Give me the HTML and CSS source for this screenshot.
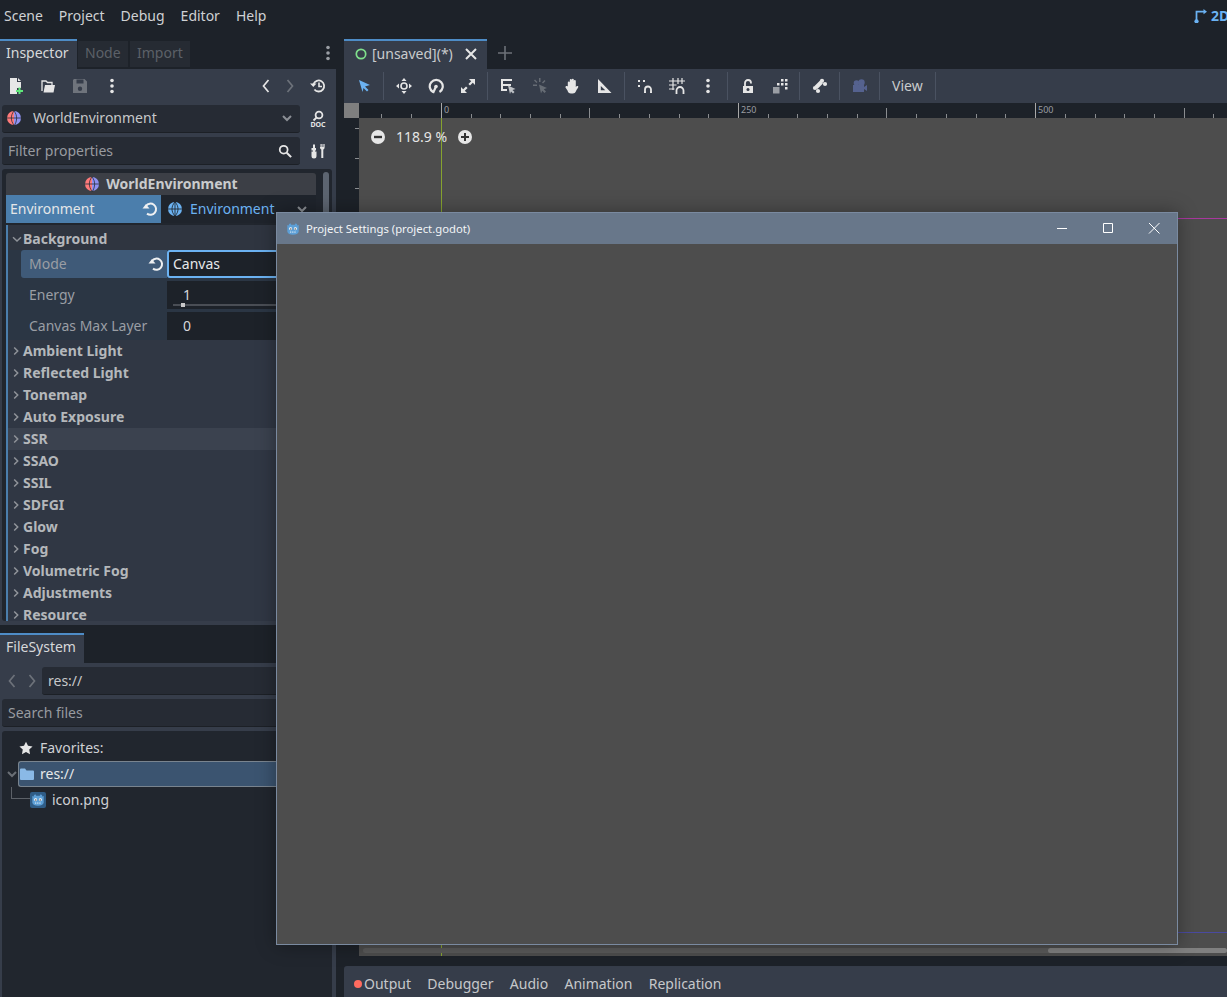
FILE: index.html
```html
<!DOCTYPE html>
<html lang="en">
<head>
<meta charset="utf-8">
<title>Godot Editor</title>
<link rel="stylesheet" href="styles.css">
</head>
<body>
<svg class="defs" aria-hidden="true">
  <symbol id="i-kebab" viewBox="0 0 16 16"><circle cx="8" cy="2.5" r="1.8"/><circle cx="8" cy="8" r="1.8"/><circle cx="8" cy="13.5" r="1.8"/></symbol>
  <symbol id="i-left" viewBox="0 0 16 16"><path d="M10.5 2 5.5 8l5 6" fill="none" stroke="currentColor" stroke-width="1.7"/></symbol>
  <symbol id="i-right" viewBox="0 0 16 16"><path d="M5.5 2l5 6-5 6" fill="none" stroke="currentColor" stroke-width="1.7"/></symbol>
  <symbol id="i-down" viewBox="0 0 16 16"><path d="M4 6l4 4 4-4" fill="none" stroke="currentColor" stroke-width="2"/></symbol>
  <symbol id="i-sec" viewBox="0 0 16 16"><path d="M6.200 4.500 9.700 8l-3.500 3.500" fill="none" stroke="currentColor" stroke-width="1.500"/></symbol>
  <symbol id="i-secdown" viewBox="0 0 16 16"><path d="M5 6.200 9 10l4-3.800" fill="none" stroke="currentColor" stroke-width="1.500"/></symbol>
  <symbol id="i-reload" viewBox="0 0 16 16"><path d="M5 12.600A5.600 5.600 0 1 0 4 4.800" fill="none" stroke="currentColor" stroke-width="2"/><path d="M0.500 7.500 7.500 7.500 3.800 3.200Z" fill="currentColor"/></symbol>
  <symbol id="i-globe" viewBox="0 0 16 16"><path d="M8 1a7 7 0 0 0 0 14z" fill="#ff7a7a"/><path d="M8 1a7 7 0 0 1 0 14z" fill="#8f92f2"/><path d="M1 8h14M8 1C4.500 5 4.500 11 8 15M8 1c3.500 4 3.500 10 0 15" fill="none" stroke="#2b303a" stroke-opacity=".8" stroke-width="1"/></symbol>
  <symbol id="i-globe-blue" viewBox="0 0 16 16"><circle cx="8" cy="8" r="7" fill="#6bb2f2"/><path d="M1 8h14M8 1v14M8 1C4 5 4 11 8 15M8 1c4 4 4 10 0 14" fill="none" stroke="#1f242c" stroke-opacity=".85" stroke-width="1"/></symbol>
  <symbol id="i-godot" viewBox="0 0 16 16"><path d="M5 1.500 6 3h4l1-1.500 1.800 1 -.3 1.500L14.500 3.500V11c-.5 2-3 3.500-6.500 3.500S2 13 1.500 11V3.500L3.500 4l-.3-1.500z" fill="#5d9fd6"/><circle cx="5.300" cy="7.800" r="1.700" fill="#fff"/><circle cx="10.700" cy="7.800" r="1.700" fill="#fff"/><circle cx="5.500" cy="8" r=".8" fill="#333"/><circle cx="10.500" cy="8" r=".8" fill="#333"/><path d="M4.500 11.500h7" stroke="#fff" stroke-width="1" stroke-dasharray="1.500 1"/></symbol>
</svg>

<header class="menubar">
  <nav class="menus">
    <span class="menu">Scene</span><span class="menu">Project</span><span class="menu">Debug</span><span class="menu">Editor</span><span class="menu">Help</span>
  </nav>
  <div class="renderer">
    <svg class="ic14" viewBox="0 0 16 16"><path d="M4 15V3h9" fill="none" stroke="#6bb2f2" stroke-width="2"/><path d="M12 0l4 3-4 3z" fill="#6bb2f2"/><circle cx="4" cy="14" r="2.400" fill="#6bb2f2"/></svg>
    <b>2D</b>
  </div>
</header>

<main class="main">
  <aside class="left">
    <section class="inspector">
      <div class="tabbar">
        <span class="tab active">Inspector</span>
        <span class="tab dim tab-node">Node</span>
        <span class="tab dim">Import</span>
        <svg class="ic16 dock-kebab"><use href="#i-kebab"/></svg>
      </div>
      <div class="panel insp-panel">
        <div class="toolbar">
          <span class="btn"><svg class="ic16" viewBox="0 0 16 16"><path d="M2 0h7v4h4v6H9v6H2z" fill="#e6e6e6"/><path d="M10 0l3 3h-3z" fill="#e6e6e6"/><path d="M10.500 9.500h2v2.500h2.500v2h-2.500v2.500h-2V14H8v-2h2.500z" fill="#5fe87a"/></svg></span>
          <span class="btn"><svg class="ic16" viewBox="0 0 16 16"><path d="M2 13V3h4l1.500 1.500H12V7" fill="none" stroke="#e6e6e6" stroke-width="1.300"/><path d="M3.500 14.500 5 7h10l-1.500 7.500z" fill="#e6e6e6"/></svg></span>
          <span class="btn"><svg class="ic16" viewBox="0 0 16 16"><path fill-rule="evenodd" d="M2 1h10.500L15 3.500V15H1V2zM4.500 1.500v4h7v-4zM8 8.500a2.200 2.200 0 1 0 0 4.400 2.200 2.200 0 0 0 0-4.400z" fill="#6f747c"/></svg></span>
          <span class="btn light"><svg class="ic16"><use href="#i-kebab"/></svg></span>
          <span class="spring"></span>
          <span class="btn narrow light"><svg class="ic16"><use href="#i-left"/></svg></span>
          <span class="btn narrow faint"><svg class="ic16"><use href="#i-right"/></svg></span>
          <span class="btn history"><svg class="ic16" viewBox="0 0 16 16"><path d="M4.400 11.500A5.500 5.500 0 1 0 3.500 6" fill="none" stroke="#e6e6e6" stroke-width="1.800"/><path d="M0 5.500h6.500l-3.200 3.500z" fill="#e6e6e6"/><path d="M9 4.500V8.500H12" fill="none" stroke="#e6e6e6" stroke-width="1.600"/></svg></span>
        </div>
        <div class="field-row">
          <div class="input select">
            <svg class="ic16"><use href="#i-globe"/></svg>
            <span class="select-text">WorldEnvironment</span>
            <svg class="ic16 caret"><use href="#i-down"/></svg>
          </div>
          <span class="side-btn"><svg class="ic18" viewBox="0 0 18 18"><circle cx="10" cy="5" r="3.400" fill="none" stroke="#e6e6e6" stroke-width="1.800"/><path d="M7.600 7.500 4.500 10.500" stroke="#e6e6e6" stroke-width="1.800"/><text x="9" y="17" class="doc-text">DOC</text></svg></span>
        </div>
        <div class="field-row">
          <div class="input">
            <span class="placeholder">Filter properties</span>
            <svg class="ic14 search" viewBox="0 0 16 16"><circle cx="6.500" cy="6.500" r="4.500" fill="none" stroke="#e6e6e6" stroke-width="2"/><path d="M10 10l5 5" stroke="#e6e6e6" stroke-width="2.400"/></svg>
          </div>
          <span class="side-btn"><svg class="ic16" viewBox="0 0 16 16"><path d="M3 1.500v3.500h-1.500v2.500h1.500v1H1.500V13a2.500 2.500 0 0 0 5 0V8.500H5v-1h1V5H5V1.500z" fill="#e6e6e6"/><path d="M10 1v3.500c0 1 .7 1.800 1.300 2V15h2V6.500c.7-.2 1.300-1 1.300-2V1h-1.200v3h-.9V1h-1.200v3h-.8V1z" fill="#e6e6e6"/></svg></span>
        </div>
        <div class="props">
          <div class="props-content">
            <div class="obj-header"><svg class="ic16"><use href="#i-globe"/></svg><b>WorldEnvironment</b></div>
            <div class="env-row">
              <div class="env-label"><span>Environment</span><svg class="ic16 revert"><use href="#i-reload"/></svg></div>
              <div class="env-value"><svg class="ic16"><use href="#i-globe-blue"/></svg><span>Environment</span><svg class="ic16 caret"><use href="#i-down"/></svg></div>
            </div>
            <div class="section">
              <div class="sec-head sec-first"><svg class="ic16 chev"><use href="#i-secdown"/></svg><b>Background</b></div>
              <div class="sec-props">
                <div class="prop">
                  <div class="prop-label on"><span>Mode</span><svg class="ic16 revert"><use href="#i-reload"/></svg></div>
                  <div class="prop-value focus">Canvas</div>
                </div>
                <div class="prop">
                  <div class="prop-label"><span>Energy</span></div>
                  <div class="prop-value num">1<span class="slider"><i class="grab"></i></span></div>
                </div>
                <div class="prop">
                  <div class="prop-label"><span>Canvas Max Layer</span></div>
                  <div class="prop-value num">0</div>
                </div>
              </div>
              <div class="sec-head"><svg class="ic16 chev"><use href="#i-sec"/></svg><b>Ambient Light</b></div>
              <div class="sec-head"><svg class="ic16 chev"><use href="#i-sec"/></svg><b>Reflected Light</b></div>
              <div class="sec-head"><svg class="ic16 chev"><use href="#i-sec"/></svg><b>Tonemap</b></div>
              <div class="sec-head"><svg class="ic16 chev"><use href="#i-sec"/></svg><b>Auto Exposure</b></div>
              <div class="sec-head hover"><svg class="ic16 chev"><use href="#i-sec"/></svg><b>SSR</b></div>
              <div class="sec-head"><svg class="ic16 chev"><use href="#i-sec"/></svg><b>SSAO</b></div>
              <div class="sec-head"><svg class="ic16 chev"><use href="#i-sec"/></svg><b>SSIL</b></div>
              <div class="sec-head"><svg class="ic16 chev"><use href="#i-sec"/></svg><b>SDFGI</b></div>
              <div class="sec-head"><svg class="ic16 chev"><use href="#i-sec"/></svg><b>Glow</b></div>
              <div class="sec-head"><svg class="ic16 chev"><use href="#i-sec"/></svg><b>Fog</b></div>
              <div class="sec-head"><svg class="ic16 chev"><use href="#i-sec"/></svg><b>Volumetric Fog</b></div>
              <div class="sec-head"><svg class="ic16 chev"><use href="#i-sec"/></svg><b>Adjustments</b></div>
              <div class="sec-head"><svg class="ic16 chev"><use href="#i-sec"/></svg><b>Resource</b></div>
            </div>
          </div>
          <div class="vscroll"></div>
        </div>
      </div>
    </section>

    <section class="filesystem">
      <div class="tabbar">
        <span class="tab active fs-tab">FileSystem</span>
      </div>
      <div class="panel fs-panel">
        <div class="path-row">
          <svg class="ic16 faint"><use href="#i-left"/></svg>
          <svg class="ic16 faint"><use href="#i-right"/></svg>
          <div class="input path">res://</div>
        </div>
        <div class="input search-files"><span class="placeholder">Search files</span></div>
        <div class="fs-tree">
          <div class="fs-row fav">
            <svg class="ic14" viewBox="0 0 16 16"><path d="M8 .8l2.300 4.700 5.200.7-3.800 3.600.9 5.200L8 12.500 3.400 15l.9-5.200L.5 6.200l5.200-.7z" fill="#e6e6e6"/></svg>
            <span>Favorites:</span>
          </div>
          <div class="fs-row root">
            <svg class="ic16 root-chev"><use href="#i-down"/></svg>
            <div class="root-box">
              <svg class="ic16" viewBox="0 0 16 16"><path d="M1 3.500a1 1 0 0 1 1-1h4l1.500 2H14a1 1 0 0 1 1 1V13a1 1 0 0 1-1 1H2a1 1 0 0 1-1-1z" fill="#8ab9e6"/></svg>
              <span>res://</span>
            </div>
          </div>
          <div class="fs-row file">
            <span class="connector"></span>
            <span class="file-ic"><svg class="ic14"><use href="#i-godot"/></svg></span>
            <span>icon.png</span>
          </div>
        </div>
      </div>
    </section>
  </aside>

  <section class="center">
    <div class="scene-tabs">
      <div class="scene-tab">
        <svg class="ic12" viewBox="0 0 12 12"><circle cx="6" cy="6" r="4.700" fill="none" stroke="#7fe08c" stroke-width="1.700"/></svg>
        <span>[unsaved](*)</span>
        <svg class="ic16 tab-x" viewBox="0 0 16 16"><path d="M3 3l10 10M13 3 3 13" stroke="#e6e6e6" stroke-width="2"/></svg>
      </div>
      <svg class="ic16 tab-plus" viewBox="0 0 16 16"><path d="M8 1v14M1 8h14" stroke="#6d7278" stroke-width="1.600"/></svg>
    </div>

    <div class="toolbar vp-tools">
      <span class="btn"><svg class="ic16" viewBox="0 0 16 16"><path d="M3 2l11 5-5 1.500 3.500 3.500-1.500 1.500L7.500 10 6.500 14z" fill="#6bb2f2"/></svg></span>
      <span class="sep"></span>
      <span class="btn"><svg class="ic16" viewBox="0 0 16 16"><path d="M8 0l2.500 3h-5zM8 16l-2.500-3h5zM0 8l3-2.500v5zM16 8l-3 2.500v-5z" fill="#e6e6e6"/><circle cx="8" cy="8" r="3" fill="none" stroke="#e6e6e6" stroke-width="1.600"/></svg></span>
      <span class="btn"><svg class="ic16" viewBox="0 0 16 16"><path d="M5 14A6.500 6.500 0 1 1 11.500 14" fill="none" stroke="#e6e6e6" stroke-width="2.200"/><circle cx="8" cy="8.500" r="1.800" fill="#e6e6e6"/><path d="M8 8.500 5 15" stroke="#e6e6e6" stroke-width="2.200"/></svg></span>
      <span class="btn"><svg class="ic16" viewBox="0 0 16 16"><path d="M9 1h6v6l-2.200-2.200-2.800 2.800-1.600-1.600 2.800-2.800zM7 15H1V9l2.200 2.200 2.800-2.800 1.600 1.600-2.800 2.800z" fill="#e6e6e6"/></svg></span>
      <span class="sep"></span>
      <span class="btn"><svg class="ic16" viewBox="0 0 16 16"><path d="M1 1h11v2H3v3h8v2H3v3h4v2H1z" fill="#e6e6e6"/><path d="M8 7.500l7.500 3.500-3 1 2 2-1.500 1.500-2-2-1 2.500z" fill="#bfc2c6"/></svg></span>
      <span class="btn"><svg class="ic16" viewBox="0 0 16 16"><path d="M7 0h1.500v4H7zM1 6.500h4V8H1zM3 1.500l2.500 2.500-1 1L2 2.500zM12.500 2l1 1-2.500 2.500-1-1z" fill="#666c74"/><path d="M7 6.500l8 3.500-3.200 1.200 2.200 2.300-1.500 1.500-2.200-2.300L9 15.500z" fill="#666c74"/></svg></span>
      <span class="btn"><svg class="ic16" viewBox="0 0 16 16"><path d="M3.800 8.500V4.500a1 1 0 0 1 2 0V2a1 1 0 0 1 2 0v-.2a1 1 0 0 1 2 0V3a1 1 0 0 1 2 0v6c.5-1 2-1.300 2.500-.5.300 1-1.500 2.500-2.500 5-.5 1-1.500 2-3 2H7c-2 0-3-1-3.500-3L1.500 9.500c-.4-1 1-2 2.300-1z" fill="#e6e6e6"/></svg></span>
      <span class="btn"><svg class="ic16" viewBox="0 0 16 16"><path fill-rule="evenodd" d="M2 1v14h13.500zM4.800 8v4.300h4.500z" fill="#e6e6e6"/></svg></span>
      <span class="sep wide"></span>
      <span class="btn"><svg class="ic16" viewBox="0 0 16 16"><path d="M8 15v-3.500a3 3 0 0 1 6 0V15" fill="none" stroke="#e6e6e6" stroke-width="1.800"/><path d="M7 13.500h2V15H7zM13 13.500h2V15h-2z" fill="#e6e6e6"/><path d="M1 2h2v2H1zM6 2h2v2H6zM1 7h2v2H1z" fill="#e6e6e6"/></svg></span>
      <span class="btn tight"><svg class="ic16" viewBox="0 0 16 16"><path d="M4 0v12M9 0v6M13 0v6M0 3h16M0 7h7.500M0 11h5.500" fill="none" stroke="#e6e6e6" stroke-width="1.200"/><path d="M7.500 16v-3.500a3.500 3.500 0 0 1 7 0V16" fill="none" stroke="#e6e6e6" stroke-width="1.800"/></svg></span>
      <span class="btn light"><svg class="ic16"><use href="#i-kebab"/></svg></span>
      <span class="sep"></span>
      <span class="btn"><svg class="ic16" viewBox="0 0 16 16"><path d="M3 8h10v7H3z" fill="#e6e6e6"/><path d="M5 8V5a3 3 0 0 1 6 0v.5" fill="none" stroke="#e6e6e6" stroke-width="1.800"/><circle cx="8" cy="11.500" r="1.500" fill="#363d4a"/></svg></span>
      <span class="btn"><svg class="ic16" viewBox="0 0 16 16"><path d="M9 1h2.500v2.500H9zM13 1h2.500v2.500H13zM13 5h2.500v2.500H13zM5 5h2.500v2.500H5zM13 9h2.500v2.500H13zM1 9h2.500v2.500H1z" fill="#e6e6e6"/><path d="M1 9h6.500v6.500H1z" fill="#9a9ea4"/><path d="M9 5h2.500v2.500H9z" fill="#e6e6e6"/></svg></span>
      <span class="sep"></span>
      <span class="btn"><svg class="ic16" viewBox="0 0 16 16"><path d="M4 9.500 9.500 4" stroke="#e6e6e6" stroke-width="4"/><circle cx="10" cy="2.800" r="2.100" fill="#e6e6e6"/><circle cx="13" cy="6" r="2.100" fill="#e6e6e6"/><circle cx="3" cy="10" r="2.100" fill="#e6e6e6"/><circle cx="6" cy="13" r="2.100" fill="#e6e6e6"/></svg></span>
      <span class="sep"></span>
      <span class="btn"><svg class="ic16" viewBox="0 0 16 16"><circle cx="4.500" cy="5" r="2.800" fill="#55628f"/><circle cx="9.500" cy="4.500" r="3.200" fill="#55628f"/><path d="M1 7h11v7H1zM12 9l3-2v6l-3-2z" fill="#55628f"/></svg></span>
      <span class="sep"></span>
      <span class="view-btn">View</span>
      <span class="sep"></span>
    </div>

    <div class="ruler-row">
      <span class="ruler-corner"></span>
      <svg class="ruler" viewBox="0 0 868 15">
        <path class="tick-minor" d="M22.500 11v4M52.500 11v4M112.500 11v4M141.500 11v4M171.500 11v4M201.500 11v4M260.500 11v4M290.500 11v4M320.500 11v4M349.500 11v4M409.500 11v4M438.500 11v4M468.500 11v4M498.500 11v4M557.500 11v4M587.500 11v4M617.500 11v4M646.500 11v4M706.500 11v4M736.500 11v4M765.500 11v4M795.500 11v4M854.500 11v4M230.500 5v10M527.500 5v10M825.500 5v10"/>
        <path class="tick-major" d="M82.500 0v15M379.500 0v15M676.500 0v15"/>
        <text class="ruler-text" x="85" y="10">0</text>
        <text class="ruler-text" x="382" y="10">250</text>
        <text class="ruler-text" x="679" y="10">500</text>
      </svg>
    </div>

    <div class="canvas-row">
      <svg class="vruler" viewBox="0 0 15 838"><path class="tick-minor" d="M11 10.500h4M11 40.500h4M11 70.500h4"/></svg>
      <div class="viewport">
        <i class="axis-y"></i>
        <i class="axis-pink"></i>
        <i class="axis-blue"></i>
        <div class="zoom-ctl">
          <svg class="ic14" viewBox="0 0 14 14"><circle cx="7" cy="7" r="7" fill="#e6e6e6"/><path d="M3 7h8" stroke="#333" stroke-width="2.400"/></svg>
          <span class="zoom-val">118.9 %</span>
          <svg class="ic14" viewBox="0 0 14 14"><circle cx="7" cy="7" r="7" fill="#e6e6e6"/><path d="M3 7h8M7 3v8" stroke="#333" stroke-width="2"/></svg>
        </div>
        <div class="hscroll"><i class="hthumb"></i></div>
      </div>
    </div>

    <div class="bottom-gap"></div>
    <footer class="bottom">
      <span class="bt first"><i class="dot"></i>Output</span>
      <span class="bt">Debugger</span>
      <span class="bt">Audio</span>
      <span class="bt">Animation</span>
      <span class="bt">Replication</span>
    </footer>
  </section>
</main>

<div class="window">
  <div class="win-title">
    <svg class="ic14"><use href="#i-godot"/></svg>
    <span class="win-name">Project Settings (project.godot)</span>
    <span class="spring"></span>
    <svg class="win-btn" viewBox="0 0 46 31"><path d="M18 15.500h10" stroke="#fff"/></svg>
    <svg class="win-btn" viewBox="0 0 46 31"><path d="M18.500 10.500h9v9h-9z" fill="none" stroke="#fff"/></svg>
    <svg class="win-btn" viewBox="0 0 46 31"><path d="M18 10l10.500 10.500M28.500 10 18 20.500" stroke="#fff"/></svg>
  </div>
  <div class="win-body"></div>
</div>
</body>
</html>
```
FILE: styles.css
```css
* { box-sizing: border-box; }
html, body { margin: 0; padding: 0; }
body {
  width: 1227px;
  height: 997px;
  overflow: hidden;
  position: relative;
  background: #1d2229;
  color: #d2d4d6;
  font: 14px/20px "Noto Sans", sans-serif;
}
.defs { display: block; width: 0; height: 0; }
svg { display: block; flex: none; fill: currentColor; }
.ic12 { width: 12px; height: 12px; }
.ic14 { width: 14px; height: 14px; }
.ic16 { width: 16px; height: 16px; }
.ic18 { width: 18px; height: 18px; }
.spring { flex: 1; }
.light { color: #e6e6e6; }
.faint { color: #6d727a; }

/* menu bar */
.menubar { height: 39px; display: flex; justify-content: space-between; padding: 6px 0 0 4px; }
.menus { display: flex; gap: 16px; height: 20px; }
.menu { color: #cfd1d4; }
.renderer { display: flex; gap: 4px; color: #6bb2f2; width: 34px; align-items: center; height: 20px; overflow: hidden; }
.renderer b { font-weight: 700; }

.main { display: flex; gap: 8px; height: 958px; }

/* left docks */
.left { width: 336px; display: flex; flex-direction: column; gap: 8px; }
.inspector { height: 586px; display: flex; flex-direction: column; }
.filesystem { flex: 1; display: flex; flex-direction: column; min-height: 0; }
.tabbar { height: 30px; display: flex; align-items: flex-end; flex: none; position: relative; }
.tab { padding: 0 7px; height: 26px; margin-bottom: 2px; line-height: 23px; background: #262b33; margin-right: 2px; }
.tab.active { padding: 0 6px; height: 30px; margin-bottom: 0; background: #363d4a; border-top: 2px solid #4e8cc6; color: #d6d8da; line-height: 24px; margin-right: 1px; width: 77px; }
.tab.dim { color: #5c6168; }
.tab-node { width: 50px; }
.fs-tab.active { width: 84px; }
.dock-kebab { position: absolute; right: 0; top: 6px; color: #9a9ea4; }
.panel { background: #363d4a; flex: 1; min-height: 0; display: flex; flex-direction: column; }

.toolbar { height: 34px; display: flex; align-items: center; flex: none; }
.btn { width: 32px; height: 28px; display: flex; align-items: center; justify-content: center; flex: none; }
.btn.narrow { width: 24px; }
.btn.tight { width: 31px; }
.btn.history { width: 32px; margin-right: 2px; }

.field-row { display: flex; height: 28px; margin: 2px 0 2px 2px; padding-right: 2px; }
.field-row .input { width: 298px; }
.side-btn { flex: 1; display: flex; align-items: center; justify-content: center; padding-left: 2px; }
.input { background: #262b34; border-radius: 3px; border-bottom: 1px solid #1c2026; height: 28px; display: flex; align-items: center; padding: 0 6px; color: #c6c8ca; }
.input.select { padding: 0 5px 2px 4px; }
.select-text { margin-left: 11px; flex: 1; }
.caret { color: #8b8f95; }
.placeholder { flex: 1; color: #989ba0; }
.search { margin-right: 1px; transform: translateX(-1px); }
.doc-text { font: 700 7px "Noto Sans", sans-serif; fill: #e6e6e6; text-anchor: middle; }

.props { flex: 1; min-height: 0; margin: 2px 4px 4px 2px; background: #21262e; border-radius: 3px; padding: 3px 3px 0 4px; display: flex; gap: 7px; overflow: hidden; }
.props-content { width: 310px; flex: none; padding-top: 1px; }
.vscroll { width: 6px; background: #5c6470; border-radius: 3px; height: 300px; }
.obj-header { height: 22px; background: #3c3f46; border-radius: 3px 3px 0 0; display: flex; align-items: center; justify-content: center; gap: 6px; color: #c9cbcd; }
.env-row { display: flex; height: 28px; }
.env-label { width: 155px; background: #4b7eac; display: flex; align-items: center; padding: 0 3px 0 4px; color: #e4e6e8; justify-content: space-between; }
.revert { color: #eef0f2; }
.env-value { flex: 1; background: #1f242c; color: #6bb2f2; display: flex; align-items: center; gap: 7px; padding: 0 6px; }
.env-value span { flex: 1; }
.section { margin-top: 2px; border-left: 2px solid #4b7eac; background: #303744; height: 396px; }
.sec-head { height: 22px; display: flex; align-items: center; color: #b4b7bb; }
.sec-head b { font-weight: 700; margin-left: -1px; line-height: 12px; }
.sec-first { background: #2f3540; height: 25px; padding-top: 3px; }
.hover { background: #3b424f; }
.chev { color: #8f9399; }
.sec-props { background: #2b3644; padding-left: 13px; height: 90px; display: flex; flex-direction: column; gap: 3px; }
.prop { display: flex; height: 28px; flex: none; }
.prop-label { width: 146px; display: flex; align-items: center; justify-content: space-between; padding: 0 3px 0 8px; color: #9a9ea4; }
.prop-label.on { background: #3f5a78; border-radius: 3px 0 0 3px; }
.prop-value { flex: 1; background: #1d2229; display: flex; align-items: center; padding: 0 6px; color: #d6d8da; position: relative; }
.prop-value.focus { border: 2px solid #6bb2f2; border-radius: 3px 0 0 3px; padding: 0 4px; color: #e6e8ea; }
.prop-value.num { padding-left: 16px; }
.slider { position: absolute; left: 6px; right: 0; bottom: 3px; height: 2px; background: #4a4e55; }
.grab { position: absolute; left: 8px; top: -1px; width: 4px; height: 4px; background: #c8c8c8; }

/* filesystem */
.path-row { display: flex; align-items: center; height: 28px; margin: 4px 0 4px 4px; gap: 4px; }
.path { flex: 1; margin-left: -2px; }
.search-files { margin-left: 2px; flex: none; }
.fs-tree { flex: 1; background: #21262e; margin: 4px 4px 0 2px; border-radius: 3px 3px 0 0; padding-top: 4px; }
.fs-row { height: 26px; display: flex; align-items: center; color: #cfd1d4; }
.fav { padding-left: 17px; gap: 7px; }
.root-chev { margin-left: 2px; color: #6a6f76; }
.root-box { flex: 1; height: 26px; background: #3b5470; border: 1px solid #79848f; border-right: 0; border-radius: 3px 0 0 3px; display: flex; align-items: center; gap: 5px; color: #e6e8ea; margin-left: -2px; }
.file { padding-left: 9px; }
.connector { width: 19px; height: 12px; border-left: 1px solid #5c6168; border-bottom: 1px solid #5c6168; align-self: flex-start; flex: none; }
.file-ic { width: 16px; height: 16px; background: #2f5c86; border-radius: 2px; display: flex; align-items: center; justify-content: center; margin-right: 6px; }

/* centre */
.center { flex: 1; display: flex; flex-direction: column; min-width: 0; }
.scene-tabs { height: 30px; display: flex; align-items: flex-end; flex: none; }
.scene-tab { width: 143px; height: 30px; background: #363d4a; border-top: 2px solid #4e8cc6; display: flex; align-items: center; padding: 0 0 3px 11px; gap: 5px; color: #c9cbcd; }
.tab-x { margin-left: 5px; }
.tab-plus { margin: 0 0 8px 10px; }
.vp-tools { background: #363d4a; padding-left: 4px; }
.sep { width: 1px; height: 28px; background: #4a5261; margin: 0 4px 0 3px; flex: none; }
.sep.wide { margin: 0 4px; }
.view-btn { margin: 0 9px 0 8px; color: #c9cbcd; }
.ruler-row { height: 15px; display: flex; flex: none; }
.ruler-corner { width: 15px; background: #7f7f7f; flex: none; }
.ruler { width: 868px; height: 15px; }
.tick-minor { stroke: #8a8d90; stroke-width: 1; fill: none; }
.tick-major { stroke: #a8a8a8; stroke-width: 1; fill: none; }
.ruler-text { font: 9px "Noto Sans", sans-serif; fill: #9a9ca0; }
.canvas-row { height: 838px; display: flex; flex: none; }
.vruler { width: 15px; height: 838px; }
.viewport { flex: 1; background: #4d4d4d; position: relative; overflow: hidden; }
.axis-y { position: absolute; left: 82px; top: 0; bottom: 0; width: 1px; background: #86a32f; }
.axis-pink { position: absolute; left: 0; right: 0; top: 100px; height: 1px; background: #a8389e; }
.axis-blue { position: absolute; left: 0; right: 0; top: 814px; height: 1px; background: #4a4aa0; }
.zoom-ctl { position: absolute; left: 12px; top: 9px; display: flex; align-items: center; height: 20px; color: #e6e6e6; }
.zoom-val { margin: 0 11px 0 4px; padding-left: 7px; width: 58px; white-space: nowrap; }
.hscroll { position: absolute; left: 4px; right: 0; bottom: 3px; height: 5px; background: #5a5a5a; border-radius: 3px; }
.hthumb { position: absolute; left: 685px; right: 0; top: 0; bottom: 0; background: #808080; border-radius: 3px; }
.bottom-gap { height: 10px; flex: none; }
.bottom { height: 31px; background: #363d4a; border-radius: 3px 0 0 0; display: flex; align-items: center; gap: 16.300px; padding: 4px 0 0 10px; color: #c6c8ca; flex: none; }
.bt { display: flex; align-items: center; }
.dot { width: 8px; height: 8px; border-radius: 50%; background: #ff6b5f; margin-right: 2px; }

/* floating window */
.window { position: absolute; left: 276px; top: 212px; width: 902px; height: 733px; border: 1px solid #7a8aa0; background: #4d4d4d; display: flex; flex-direction: column; box-shadow: 0 0 18px rgba(0, 0, 0, .35); }
.win-title { height: 31px; background: #68778a; display: flex; align-items: center; padding-left: 9px; color: #f2f4f6; flex: none; }
.win-name { font-size: 11.300px; margin-left: 6px; }
.win-btn { width: 46px; height: 31px; fill: none; }
.win-body { flex: 1; background: #4d4d4d; }
```
